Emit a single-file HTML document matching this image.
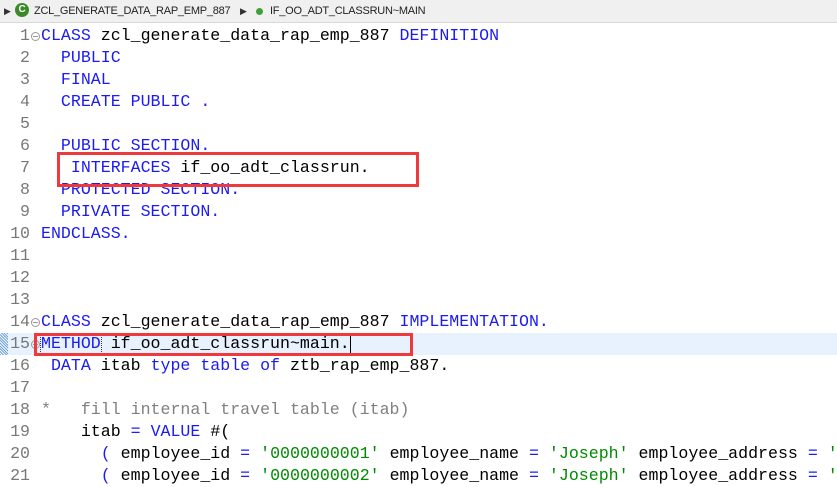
<!DOCTYPE html>
<html><head><style>
body{margin:0;width:837px;height:476px;overflow:hidden;background:#fff;position:relative;font-family:"Liberation Mono",monospace}
#bar{position:absolute;left:0;top:0;width:837px;height:22px;background:#f0f0f0;border-bottom:1px solid #d8d8d8;font-family:"Liberation Sans",sans-serif;font-size:11px;letter-spacing:-0.25px;color:#222;line-height:22px}
#bar span{position:absolute;top:0}
#lines{position:absolute;left:0;top:1px;width:837px;height:476px}
.ln{position:absolute;left:0;width:30px;text-align:right;color:#787878;font-size:16.6px;line-height:22px}
.cd{position:absolute;left:41px;white-space:pre;font-size:16.6px;line-height:22px;color:#000}
.k{color:#1c1cf0}.s{color:#008a00}.c{color:#808080}
.fold{position:absolute;left:31px;width:7px;height:7px;border:1px solid #999;border-radius:50%;font-size:0}
.fold:after{content:"";position:absolute;left:1px;top:3px;width:5px;height:1px;background:#999}
.box{position:absolute;border:3px solid #f0393c}
</style></head><body>
<div id="bar">
<span style="left:4px;font-size:9px;color:#333">&#9654;</span>
<span style="left:15px;top:3px;width:14px;height:14px;border-radius:50%;background:#3a8a2a;color:#fff;font-weight:bold;font-size:10px;line-height:14px;text-align:center">C</span>
<span style="left:34px">ZCL_GENERATE_DATA_RAP_EMP_887</span>
<span style="left:240px;font-size:9px;color:#333">&#9654;</span>
<span style="left:256px;top:8px;width:7px;height:7px;border-radius:50%;background:#3ca03c"></span>
<span style="left:270px">IF_OO_ADT_CLASSRUN~MAIN</span>
</div>
<div style="position:absolute;left:0;top:333px;width:837px;height:22px;background:#e8f2fe"></div>
<div style="position:absolute;left:0;top:333px;width:8px;height:22px;background:repeating-linear-gradient(45deg,#6aa0e0 0 1px,#fff 1px 2px)"></div>
<div id="lines">
<div class="ln" style="top:24px">1</div><div class="fold" style="top:31px"></div><div class="cd" style="top:24px"><span class="k">CLASS</span> zcl_generate_data_rap_emp_887 <span class="k">DEFINITION</span></div>
<div class="ln" style="top:46px">2</div><div class="cd k" style="top:46px">  PUBLIC</div>
<div class="ln" style="top:68px">3</div><div class="cd k" style="top:68px">  FINAL</div>
<div class="ln" style="top:90px">4</div><div class="cd k" style="top:90px">  CREATE PUBLIC .</div>
<div class="ln" style="top:112px">5</div>
<div class="ln" style="top:134px">6</div><div class="cd k" style="top:134px">  PUBLIC SECTION.</div>
<div class="ln" style="top:156px">7</div><div class="cd" style="top:156px">   <span class="k">INTERFACES</span> if_oo_adt_classrun.</div>
<div class="ln" style="top:178px">8</div><div class="cd k" style="top:178px">  PROTECTED SECTION.</div>
<div class="ln" style="top:200px">9</div><div class="cd k" style="top:200px">  PRIVATE SECTION.</div>
<div class="ln" style="top:222px">10</div><div class="cd k" style="top:222px">ENDCLASS.</div>
<div class="ln" style="top:244px">11</div>
<div class="ln" style="top:266px">12</div>
<div class="ln" style="top:288px">13</div>
<div class="ln" style="top:310px">14</div><div class="fold" style="top:317px"></div><div class="cd" style="top:310px"><span class="k">CLASS</span> zcl_generate_data_rap_emp_887 <span class="k">IMPLEMENTATION.</span></div>
<div class="ln" style="top:332px">15</div><div class="fold" style="top:339px"></div><div class="cd" style="top:332px"><span class="k" style="outline:1px dotted #336">METHOD</span> if_oo_adt_classrun~main.<span style="border-left:1px solid #000"></span></div>
<div class="ln" style="top:354px">16</div><div class="cd" style="top:354px"> <span class="k">DATA</span> itab <span class="k">type table of</span> ztb_rap_emp_887.</div>
<div class="ln" style="top:376px">17</div>
<div class="ln" style="top:398px">18</div><div class="cd c" style="top:398px">*   fill internal travel table (itab)</div>
<div class="ln" style="top:420px">19</div><div class="cd" style="top:420px">    itab <span class="k">=</span> <span class="k">VALUE</span> #(</div>
<div class="ln" style="top:442px">20</div><div class="cd" style="top:442px">      <span class="k">(</span> employee_id <span class="k">=</span> <span class="s">'0000000001'</span> employee_name <span class="k">=</span> <span class="s">'Joseph'</span> employee_address <span class="k">=</span> <span class="s">'</span></div>
<div class="ln" style="top:464px">21</div><div class="cd" style="top:464px">      <span class="k">(</span> employee_id <span class="k">=</span> <span class="s">'0000000002'</span> employee_name <span class="k">=</span> <span class="s">'Joseph'</span> employee_address <span class="k">=</span> <span class="s">'</span></div>
</div>
<div class="box" style="left:57px;top:152px;width:356px;height:29px"></div>
<div class="box" style="left:34px;top:333px;width:373px;height:17px"></div>
</body></html>
